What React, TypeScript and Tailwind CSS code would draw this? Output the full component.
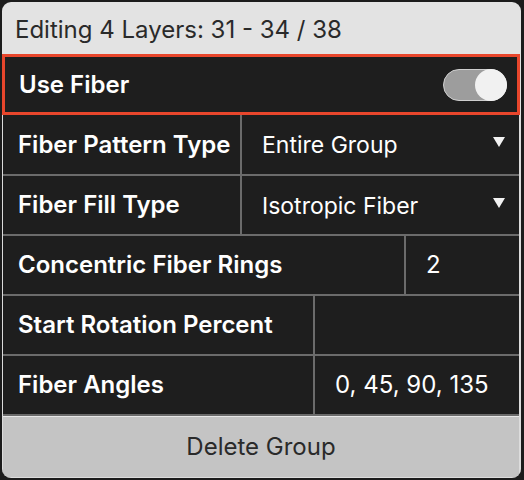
const font = { fontFamily: "Inter, 'Liberation Sans', sans-serif" };

function Arrow() {
  return (
    <svg width="12" height="10" viewBox="0 0 12 10" className="self-start mt-[22px] shrink-0">
      <polygon points="0,0 12,0 6,10" fill="#f2f2f2" />
    </svg>
  );
}

function Toggle() {
  return (
    <div className="relative w-[64px] h-[32px] rounded-full bg-[#9d9d9d] border border-[#cfcfcf]">
      <div className="absolute right-[-1px] top-[-1px] w-[32px] h-[32px] rounded-full bg-[#f1f1f1]" />
    </div>
  );
}

export default function App() {
  return (
    <div className="w-[524px] h-[480px] bg-[#1c1c1c] p-[2px]" style={font}>
      <div className="w-[519px] rounded-[9px] overflow-hidden bg-[#e3e3e3] flex flex-col">
        <div className="h-[52px] pl-[13px] pt-[3px] flex items-center text-[24px] text-[#2a2a2a]">
          Editing 4 Layers: 31 - 34 / 38
        </div>

        <div className="h-[61px] w-[518px] border-[3px] border-[#e8462c] bg-[#1e1e1e] flex items-center justify-between pl-[14px] pr-[10px]">
          <span className="text-[24px] font-semibold text-white">Use Fiber</span>
          <Toggle />
        </div>

        <div className="border-l-[1.5px] border-r-2 border-b border-[#dcdcdc] bg-[#1e1e1e] text-[24px] text-white flex flex-col">
          <div className="h-[61px] flex border-b-2 border-[#6b6b6b]">
            <div className="w-[239px] border-r-2 border-[#6b6b6b] flex items-center pl-[15px] font-semibold">
              Fiber Pattern Type
            </div>
            <div className="flex-1 flex items-center justify-between pl-[20px] pr-[14px]">
              <span className="text-[23px] pt-[2px]">Entire Group</span>
              <Arrow />
            </div>
          </div>

          <div className="h-[60px] flex border-b-2 border-[#6b6b6b]">
            <div className="w-[239px] border-r-2 border-[#6b6b6b] flex items-center pl-[15px] font-semibold">
              Fiber Fill Type
            </div>
            <div className="flex-1 flex items-center justify-between pl-[20px] pr-[14px]">
              <span className="text-[23px] pt-[2px]">Isotropic Fiber</span>
              <Arrow />
            </div>
          </div>

          <div className="h-[60px] flex border-b-2 border-[#6b6b6b]">
            <div className="w-[403px] border-r-2 border-[#6b6b6b] flex items-center pl-[15px] font-semibold">
              Concentric Fiber Rings
            </div>
            <div className="flex-1 flex items-center pl-[20px]">2</div>
          </div>

          <div className="h-[60px] flex border-b-2 border-[#6b6b6b]">
            <div className="w-[312px] border-r-2 border-[#6b6b6b] flex items-center pl-[15px] font-semibold">
              Start Rotation Percent
            </div>
            <div className="flex-1" />
          </div>

          <div className="h-[60px] flex border-b-2 border-[#6b6b6b]">
            <div className="w-[312px] border-r-2 border-[#6b6b6b] flex items-center pl-[15px] font-semibold">
              Fiber Angles
            </div>
            <div className="flex-1 flex items-center pl-[20px]">0, 45, 90, 135</div>
          </div>

          <div className="h-[61px] border-t border-[#e8e8e8] bg-[#c4c4c4] flex items-center justify-center text-[#2a2a2a]">
            Delete Group
          </div>
        </div>
      </div>
    </div>
  );
}
